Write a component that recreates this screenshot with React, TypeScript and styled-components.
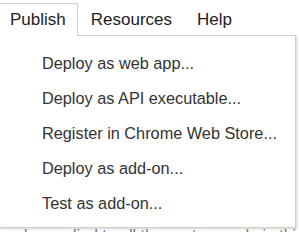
import React from 'react';
import styled, { createGlobalStyle } from 'styled-components';

const GlobalStyle = createGlobalStyle`
  html, body {
    margin: 0;
    padding: 0;
    background: #ffffff;
    font-family: "Liberation Sans", Arial, sans-serif;
    overflow: hidden;
  }
`;

const Page = styled.div`
  position: relative;
  width: 300px;
  height: 232px;
  overflow: hidden;
  padding-top: 3px;
  box-sizing: border-box;
`;

const MenuBar = styled.div`
  display: flex;
  align-items: flex-start;
  position: relative;
  z-index: 2;
`;

const BarItem = styled.div<{ $open?: boolean }>`
  font-size: 17px;
  line-height: 31px;
  color: #222;
  padding: 0 11px 0 10px;
  margin-left: ${p => (p.$open ? '-1px' : '0')};
  border: 1px solid ${p => (p.$open ? '#cfcfcf' : 'transparent')};
  border-bottom: none;
  background: ${p => (p.$open ? '#fff' : 'transparent')};
  height: 32px;
  margin-right: 2px;
`;

const Dropdown = styled.div`
  position: absolute;
  top: 35px;
  left: -1px;
  width: 297px;
  height: 193px;
  box-sizing: border-box;
  background: #fff;
  border: 1px solid #cfcfcf;
  box-shadow: 1px 1px 2px rgba(0, 0, 0, 0.18);
  padding: 10px 0 5px 42px;
  z-index: 1;
`;

const MenuItem = styled.div`
  font-size: 16.3px;
  line-height: 35px;
  color: #333;
  white-space: nowrap;
`;

const Backdrop = styled.div`
  position: absolute;
  left: 0;
  top: 227px;
  width: 100%;
  padding-left: 24px;
  font-size: 16px;
  line-height: 18px;
  color: #777;
  white-space: nowrap;
`;

const items = [
  'Deploy as web app...',
  'Deploy as API executable...',
  'Register in Chrome Web Store...',
  'Deploy as add-on...',
  'Test as add-on...',
];

export default function App() {
  return (
    <>
      <GlobalStyle />
      <Page>
        <MenuBar>
          <BarItem $open>Publish</BarItem>
          <BarItem>Resources</BarItem>
          <BarItem>Help</BarItem>
        </MenuBar>
        <Backdrop>be applied to all the custom code in this project</Backdrop>
        <Dropdown>
          {items.map(t => (
            <MenuItem key={t}>{t}</MenuItem>
          ))}
        </Dropdown>
      </Page>
    </>
  );
}
